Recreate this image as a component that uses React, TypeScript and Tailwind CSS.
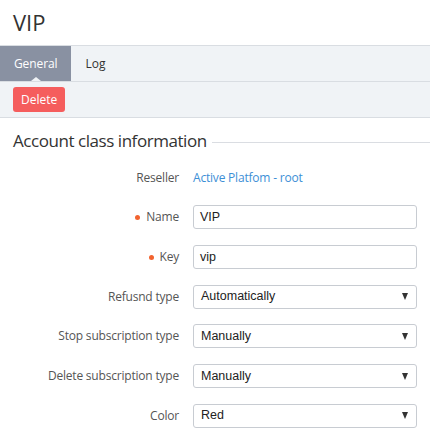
export default function App() {
  const selects = [
    { label: "Refusnd type", value: "Automatically" },
    { label: "Stop subscription type", value: "Manually" },
    { label: "Delete subscription type", value: "Manually" },
    { label: "Color", value: "Red" },
  ]

  return (
    <main className="min-h-screen bg-white text-[#333] font-['Open_Sans',sans-serif]">
      <h1 className="px-[13px] pt-[6px] h-[45px] text-[22px] leading-[32px] text-[#333]">VIP</h1>

      <div className="flex h-[37px] bg-[#f0f3f6] border-y border-[#d9dde2]">
        <div className="relative flex items-center px-[14px] bg-[#8991a2] text-white text-[12px] tracking-[-0.1px]">
          General
          <span className="absolute left-1/2 -translate-x-1/2 bottom-0 w-0 h-0 border-x-[5px] border-x-transparent border-b-[4px] border-b-[#f0f3f6]" />
        </div>
        <div className="flex items-center px-[14px] text-[12px] text-[#333]">Log</div>
      </div>

      <div className="flex items-center h-[36px] px-[13px] bg-[#f0f3f6] border-b border-[#d9dde2]">
        <button className="h-[25px] px-[8px] rounded-[3px] bg-[#f55d5d] text-white text-[12px] leading-none">
          Delete
        </button>
      </div>

      <div className="flex items-center gap-[5px] px-[13px] pt-[6px] h-[40px]">
        <h2 className="text-[17px] tracking-[-0.45px] text-[#333] whitespace-nowrap">Account class information</h2>
        <div className="flex-1 h-px bg-[#dadde2] mr-[-13px] mt-[2px]" />
      </div>

      <div className="flex flex-col text-[12px]">
        <Row label="Reseller">
          <span className="text-[#3d8fd6] leading-[24px] tracking-[-0.2px]">Active Platfom - root</span>
        </Row>
        <Row label="Name" required>
          <TextBox value="VIP" />
        </Row>
        <Row label="Key" required>
          <TextBox value="vip" />
        </Row>
        {selects.map((s) => (
          <Row key={s.label} label={s.label}>
            <Select value={s.value} />
          </Row>
        ))}
      </div>
    </main>
  )
}

function Row({ label, required, children }: { label: string; required?: boolean; children: React.ReactNode }) {
  return (
    <div className="flex items-center h-[39.67px]">
      <div className="w-[179px] flex items-center justify-end text-[#555] whitespace-nowrap tracking-[-0.2px]">
        {required && <span className="w-[5px] h-[5px] rounded-full bg-[#f2632f] mr-[6px]" />}
        {label}
      </div>
      <div className="ml-[14px] w-[224px]">{children}</div>
    </div>
  )
}

function TextBox({ value }: { value: string }) {
  return (
    <div className="h-[24px] border border-[#c8ccd2] rounded-[3px] px-[6px] flex items-center font-['Liberation_Sans',sans-serif] text-[12.5px] text-[#222]">
      {value}
    </div>
  )
}

function Select({ value }: { value: string }) {
  return (
    <div className="h-[24px] border border-[#c8ccd2] rounded-[3px] pl-[7px] pr-[8px] flex items-center justify-between font-['Liberation_Sans',sans-serif] text-[12.5px] text-[#222]">
      <span>{value}</span>
      <span className="w-0 h-0 border-x-[3.5px] border-x-transparent border-t-[7px] border-t-[#333]" />
    </div>
  )
}
